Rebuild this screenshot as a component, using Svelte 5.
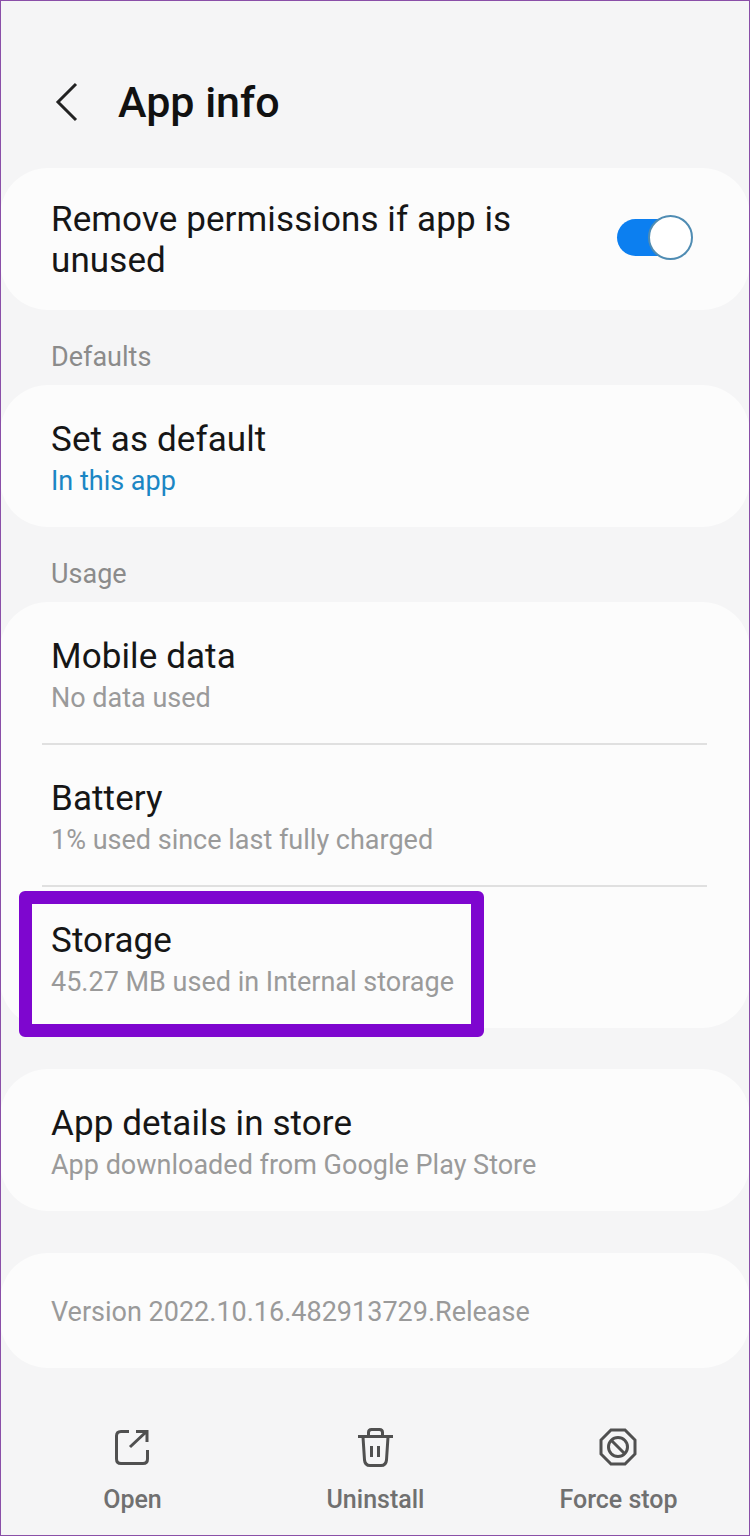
<script>
	const usage = [
		{ title: 'Mobile data', sub: 'No data used' },
		{ title: 'Battery', sub: '1% used since last fully charged' },
		{ title: 'Storage', sub: '45.27 MB used in Internal storage', marked: true }
	];
</script>

<div class="screen">
	<header>
		<svg class="back" viewBox="0 0 26 40" aria-hidden="true">
			<path d="M22 2 L4 20 L22 38" />
		</svg>
		<h1>App info</h1>
	</header>

	<section class="card toggle-card">
		<p class="title">Remove permissions if app is unused</p>
		<div class="switch"><span class="knob"></span></div>
	</section>

	<h2>Defaults</h2>
	<section class="card">
		<div class="row">
			<p class="title">Set as default</p>
			<p class="sub link">In this app</p>
		</div>
	</section>

	<h2>Usage</h2>
	<section class="card">
		{#each usage as item}
			<div class="row" class:marked={item.marked}>
				<p class="title">{item.title}</p>
				<p class="sub">{item.sub}</p>
			</div>
		{/each}
	</section>

	<section class="card store">
		<div class="row">
			<p class="title">App details in store</p>
			<p class="sub">App downloaded from Google Play Store</p>
		</div>
	</section>

	<section class="card version">
		<p class="sub">Version 2022.10.16.482913729.Release</p>
	</section>

	<nav>
		<div class="action">
			<svg viewBox="0 0 40 40" aria-hidden="true">
				<path d="M17 4.500 H9 Q4.500 4.500 4.500 9 V32 Q4.500 36.500 9 36.500 H31 Q35.500 36.500 35.500 32 V23" />
				<path d="M18 20 L34 5 M24 4.500 H35 V15" />
			</svg>
			<span>Open</span>
		</div>
		<div class="action">
			<svg viewBox="0 0 40 40" aria-hidden="true">
				<path d="M3 9.500 H38 M13.500 9 V5.500 Q13.500 2.500 16.500 2.500 H24.500 Q27.500 2.500 27.500 5.500 V9" />
				<path d="M8 10 L9.500 33 Q10 38.500 15 38.500 H26 Q31 38.500 31.500 33 L33 10" />
				<path d="M16.500 19 V30 M23.500 19 V30" />
			</svg>
			<span>Uninstall</span>
		</div>
		<div class="action">
			<svg viewBox="0 0 40 40" aria-hidden="true">
				<path d="M13 3 H27 L37 13 V27 L27 37 H13 L3 27 V13 Z" />
				<circle cx="20" cy="20" r="9.500" />
				<path d="M13.500 13.500 L26.500 26.500" />
			</svg>
			<span>Force stop</span>
		</div>
	</nav>
</div>

<style>
	:global(body) {
		background: #f5f5f6;
	}

	.screen {
		box-sizing: border-box;
		width: 750px;
		height: 1536px;
		border: 1px solid #8a4fa8;
		background: #f5f5f6;
		font-family: Roboto, sans-serif;
		color: #161616;
		overflow: hidden;
	}

	header {
		display: flex;
		align-items: center;
		gap: 38px;
		height: 167px;
		padding: 35px 0 0 53px;
		box-sizing: border-box;
	}

	.back {
		width: 26px;
		height: 40px;
	}

	.back path {
		fill: none;
		stroke: #222;
		stroke-width: 3;
	}

	h1 {
		margin: 0;
		font-size: 43px;
		font-weight: 500;
		color: #111;
	}

	h2 {
		margin: 0;
		height: 75px;
		padding: 32px 0 0 50px;
		box-sizing: border-box;
		font-size: 27px;
		line-height: 30px;
		font-weight: 400;
		color: #8b8b8b;
	}

	.card {
		background: #fcfcfc;
		border-radius: 48px;
		margin: 0 -1px;
	}

	.store {
		margin-top: 41px;
	}

	.toggle-card {
		display: flex;
		align-items: center;
		justify-content: space-between;
		height: 142px;
		padding: 0 56px 0 51px;
		box-sizing: border-box;
	}

	.toggle-card .title {
		width: 480px;
		padding-top: 2px;
		line-height: 41px;
	}

	.switch {
		position: relative;
		width: 65px;
		height: 37px;
		margin: -4px 12px 0 0;
		border-radius: 19px;
		background: #0c7ff0;
	}

	.knob {
		position: absolute;
		right: -11px;
		top: -4px;
		box-sizing: border-box;
		width: 45px;
		height: 45px;
		border-radius: 50%;
		background: #fff;
		border: 2px solid #4f8cb3;
	}

	.row {
		position: relative;
		box-sizing: border-box;
		height: 142px;
		padding: 35px 0 0 51px;
	}

	.row + .row::before {
		content: '';
		position: absolute;
		left: 42px;
		right: 43px;
		top: -1px;
		height: 2px;
		background: #e0e0e0;
	}

	.marked::after {
		content: '';
		position: absolute;
		left: 19px;
		top: 5px;
		box-sizing: border-box;
		width: 465px;
		height: 146px;
		border: 13px solid #7e06cf;
		border-radius: 6px;
	}

	p {
		margin: 0;
	}

	.title {
		font-size: 35px;
		line-height: 40px;
		letter-spacing: 0.1px;
	}

	.sub {
		margin-top: 1px;
		font-size: 27px;
		line-height: 40px;
		color: #9a9a9a;
	}

	.link {
		color: #1b86c4;
	}

	.version {
		height: 115px;
		margin-top: 42px;
		padding: 39px 0 0 51px;
		box-sizing: border-box;
	}

	.version .sub {
		margin: 0;
	}

	nav {
		display: grid;
		grid-template-columns: repeat(3, 243px);
		padding: 59px 0 0 10px;
	}

	.action {
		display: flex;
		flex-direction: column;
		align-items: center;
		gap: 18px;
		font-size: 25px;
		font-weight: 500;
		color: #707070;
	}

	.action svg {
		width: 40px;
		height: 40px;
		margin-right: 2px;
	}

	.action path,
	.action circle {
		fill: none;
		stroke: #505050;
		stroke-width: 3;
	}
</style>
